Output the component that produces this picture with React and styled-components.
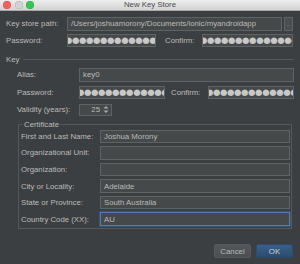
import React from 'react';
import styled, { createGlobalStyle, css } from 'styled-components';

const GlobalStyle = createGlobalStyle`
	html, body {
		margin: 0;
		padding: 0;
		background: #3c3f41;
	}
`;

const certificateRows = [
	{ label: 'First and Last Name:', value: 'Joshua Morony' },
	{ label: 'Organizational Unit:', value: '' },
	{ label: 'Organization:', value: '' },
	{ label: 'City or Locality:', value: 'Adelaide' },
	{ label: 'State or Province:', value: 'South Australia' },
	{ label: 'Country Code (XX):', value: 'AU', focused: true }
];

const Masked = ({ count }) => <Dots>{'●'.repeat(count)}</Dots>;

const App = () => (
	<Window>
		<GlobalStyle />
		<TitleBar>
			<Lights>
				<Light color="#fc605c" />
				<Light color="#d3d3d3" />
				<Light color="#34c84a" />
			</Lights>
			<Title>New Key Store</Title>
			<span />
		</TitleBar>
		<Content>
			<TopRows>
				<Row>
					<Label width={61}>Key store path:</Label>
					<Field>/Users/joshuamorony/Documents/ionic/myandroidapp</Field>
					<BrowseButton>...</BrowseButton>
				</Row>
				<Row>
					<Label width={61}>Password:</Label>
					<Field width={89}>
						<Masked count={14} />
					</Field>
					<Label width={37} indent={9}>Confirm:</Label>
					<Field>
						<Masked count={14} />
					</Field>
				</Row>
			</TopRows>

			<GroupHeader>
				<span>Key</span>
				<Rule />
			</GroupHeader>

			<KeyRows>
				<Row>
					<Label width={62}>Alias:</Label>
					<Field>key0</Field>
				</Row>
				<Row>
					<Label width={62}>Password:</Label>
					<Field width={86}>
						<Masked count={14} />
					</Field>
					<Label width={37} indent={6}>Confirm:</Label>
					<Field>
						<Masked count={14} />
					</Field>
				</Row>
				<Row>
					<Label width={62}>Validity (years):</Label>
					<Spinner>
						<SpinValue>25</SpinValue>
						<svg width="6" height="9" viewBox="0 0 6 9">
							<path d="M0.5 3.5 L3 1 L5.5 3.5 Z" fill="#a9acae" />
							<path d="M0.5 5.5 L3 8 L5.5 5.5 Z" fill="#a9acae" />
						</svg>
					</Spinner>
				</Row>
			</KeyRows>

			<Certificate>
				<Legend>Certificate</Legend>
				<CertGrid>
					{certificateRows.map(row => (
						<React.Fragment key={row.label}>
							<span>{row.label}</span>
							<Field focused={row.focused}>{row.value}</Field>
						</React.Fragment>
					))}
				</CertGrid>
			</Certificate>

			<Footer>
				<Button>Cancel</Button>
				<Button primary>OK</Button>
			</Footer>
		</Content>
	</Window>
);

const Window = styled.div`
	width: 300px;
	height: 264px;
	display: flex;
	flex-direction: column;
	overflow: hidden;
	background: #3c3f41;
	color: #bbbbbb;
	font-family: 'Liberation Sans', Arial, sans-serif;
	font-size: 7.8px;
`;

const TitleBar = styled.div`
	height: 10px;
	flex: none;
	display: grid;
	grid-template-columns: 1fr auto 1fr;
	align-items: center;
	background: linear-gradient(#ededed, #d3d3d3);
	border-bottom: 1px solid #a9a9a9;
	color: #4a4a4a;
`;

const Lights = styled.div`
	display: flex;
	gap: 3.5px;
	padding-left: 3px;
`;

const Light = styled.span`
	width: 8px;
	height: 8px;
	border-radius: 50%;
	background: ${p => p.color};
	box-shadow: inset 0 0 0 0.5px rgba(0, 0, 0, 0.15);
`;

const Title = styled.span`
	font-size: 7.8px;
	line-height: 10px;
`;

const Content = styled.div`
	flex: 1;
	display: flex;
	flex-direction: column;
	padding: 6px;
`;

const TopRows = styled.div`
	display: flex;
	flex-direction: column;
	gap: 3px;
	margin-right: 1px;
`;

const Row = styled.div`
	display: flex;
	align-items: center;
	height: 13.5px;
`;

const Label = styled.span`
	flex: none;
	width: ${p => p.width}px;
	margin-left: ${p => p.indent || 0}px;
	white-space: nowrap;
`;

const fieldBox = css`
	box-sizing: border-box;
	height: 100%;
	background: #45494a;
	border: 1px solid #5f6364;
`;

const Field = styled.div`
	${fieldBox};
	${p => (p.width ? `flex: none; width: ${p.width}px;` : 'flex: 1; min-width: 0;')}
	display: flex;
	align-items: center;
	padding-left: 3px;
	overflow: hidden;
	white-space: nowrap;
	color: #bbbbbb;
	${p =>
		p.focused &&
		css`
			border-color: #4d7fb5;
			box-shadow: 0 0 0 0.5px #3d6a9a;
		`}
`;

const Dots = styled.span`
	font-family: 'DejaVu Sans', sans-serif;
	font-size: 8.5px;
	letter-spacing: -0.4px;
	color: #c8c8c8;
	margin-left: -6px;
`;

const BrowseButton = styled.div`
	${fieldBox};
	flex: none;
	width: 9px;
	margin-left: 2px;
	display: flex;
	align-items: center;
	justify-content: center;
	background: #4a4e50;
	color: #8d8f91;
	font-size: 5px;
`;

const GroupHeader = styled.div`
	display: flex;
	align-items: center;
	gap: 4px;
	margin-top: 8px;
	height: 9px;
`;

const Rule = styled.span`
	flex: 1;
	height: 1px;
	background: #56595b;
`;

const KeyRows = styled.div`
	display: flex;
	flex-direction: column;
	gap: 4px;
	margin: 4px 0 0 11px;
`;

const Spinner = styled.div`
	${fieldBox};
	width: 33px;
	height: 11.5px;
	display: flex;
	align-items: center;
	justify-content: flex-end;
	gap: 3px;
	padding-right: 2px;
`;

const SpinValue = styled.span`
	color: #bbbbbb;
`;

const Certificate = styled.fieldset`
	margin: 3px 2px 0 12px;
	padding: 1px 1px 2px 2px;
	border: 1px solid #55585a;
	min-width: 0;
`;

const Legend = styled.legend`
	padding: 0 1px;
	margin-left: 2px;
	line-height: 9px;
`;

const CertGrid = styled.div`
	display: grid;
	grid-template-columns: 79px 1fr;
	grid-auto-rows: 13.6px;
	row-gap: 3px;
	align-items: center;
	white-space: nowrap;
`;

const Footer = styled.div`
	margin-top: auto;
	display: flex;
	justify-content: flex-end;
	gap: 5px;
	padding-right: 1px;
`;

const Button = styled.button`
	width: 37px;
	height: 14px;
	padding: 0;
	border-radius: 2px;
	font-family: inherit;
	font-size: 7.8px;
	color: ${p => (p.primary ? '#d2d6da' : '#bbbbbb')};
	border: 1px solid ${p => (p.primary ? '#2c4a6c' : '#55595b')};
	background: ${p =>
		p.primary ? 'linear-gradient(#3a608a, #2d4b6d)' : 'linear-gradient(#53575a, #4b4f51)'};
`;

export default App;
